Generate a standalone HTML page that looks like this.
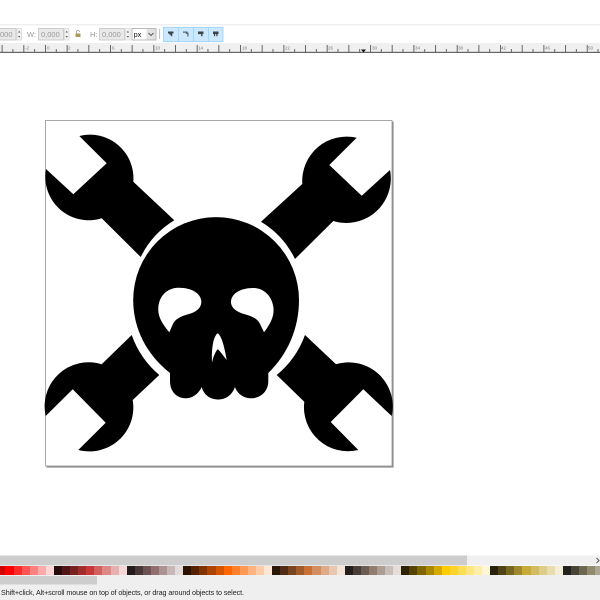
<!DOCTYPE html>
<html>
<head>
<meta charset="utf-8">
<style>
html,body{margin:0;padding:0;background:#fff;width:600px;height:600px;overflow:hidden}
#pal{position:absolute;left:-2.6px;top:566px;height:8.5px;display:flex;width:640px}
#pal i{display:block;flex:0 0 8.09px;height:8.5px}
svg{position:absolute;left:0;top:0}
</style>
</head>
<body>
<svg width="600" height="600" viewBox="0 0 600 600" font-family="'Liberation Sans',sans-serif">
<defs>
<pattern id="rt" x="1.67" y="44" width="21.67" height="9" patternUnits="userSpaceOnUse">
<rect x="0" y="1" width="0.9" height="7" fill="#555"/>
<rect x="10.8" y="5" width="0.9" height="3" fill="#555"/>
</pattern>
</defs>
<!-- toolbar -->
<rect x="0" y="24" width="600" height="1.4" fill="#efefef"/>
<rect x="-10" y="28.5" width="26" height="11.5" fill="#e9e9e9" stroke="#c4c4c4" stroke-width=".8"/>
<text x="0" y="37" font-size="7.5" fill="#999">000</text>
<rect x="17" y="28.5" width="4.5" height="11.5" fill="#f2f2f2" stroke="#d0d0d0" stroke-width=".6"/>
<path d="M18 32.5l1.2-1.6 1.2 1.6zM18 36l1.2 1.6 1.2-1.6z" fill="#555"/>
<text x="27" y="37" font-size="7.5" fill="#999">W:</text>
<rect x="38.5" y="28.5" width="25" height="11.5" fill="#e9e9e9" stroke="#c4c4c4" stroke-width=".8"/>
<text x="41" y="37" font-size="7.5" fill="#999">0,000</text>
<rect x="64.5" y="28.5" width="4.5" height="11.5" fill="#f2f2f2" stroke="#d0d0d0" stroke-width=".6"/>
<path d="M65.5 32.5l1.2-1.6 1.2 1.6zM65.5 36l1.2 1.6 1.2-1.6z" fill="#555"/>
<rect x="75.5" y="33.5" width="5" height="3.5" fill="#a89a5a"/>
<path d="M76.5 33.5v-1.5a1.5 1.5 0 0 1 3 0" fill="none" stroke="#999" stroke-width=".8"/>
<text x="90" y="37" font-size="7.5" fill="#999">H:</text>
<rect x="99.5" y="28.5" width="25" height="11.5" fill="#e9e9e9" stroke="#c4c4c4" stroke-width=".8"/>
<text x="102" y="37" font-size="7.5" fill="#999">0,000</text>
<rect x="125.7" y="28.5" width="4.5" height="11.5" fill="#f2f2f2" stroke="#d0d0d0" stroke-width=".6"/>
<path d="M126.7 32.5l1.2-1.6 1.2 1.6zM126.7 36l1.2 1.6 1.2-1.6z" fill="#555"/>
<rect x="132" y="28.5" width="24" height="11.5" fill="#fff" stroke="#aaa" stroke-width=".8"/>
<rect x="146.5" y="29" width="9" height="10.5" fill="#e2e2e2"/>
<path d="M148.5 33l2.5 2.5 2.5-2.5" fill="none" stroke="#555" stroke-width=".9"/>
<text x="133.5" y="37" font-size="7.5" fill="#222">px</text>
<rect x="159.2" y="29" width="0.9" height="10" fill="#bbb"/>
<!-- toggle buttons -->
<rect x="163.3" y="27" width="60" height="15" fill="#cce8ff"/>
<path d="M163.5 27v15M178.5 27v15M193.5 27v15M208.5 27v15M223 27v15M163 27.3h60M163 41.7h60" stroke="#99d1ff" stroke-width=".8" fill="none"/>
<g fill="#3c4448">
<path d="M168 31.5h5.5v2h-1.3v2.8h-1.4v-1.6h-1.4v-1.2h-1.4z"/>
<path d="M183 31.5h4.5v1h1v4h-1.2v-2.5h-1.5v-1.2h-2.8z" opacity=".8"/>
<path d="M198 31.5h5.5v2.4h-1v2.4h-1.4v-2.2h-3.1z"/>
<path d="M213 31.5h5.5v2.6h-1v2.2h-1.2v-2.2h-1.2v2.2h-1.1v-2.2h-1z"/>
</g>
<!-- ruler -->
<rect x="0" y="43" width="600" height="9" fill="#f0f0f0"/>
<rect x="0" y="44" width="600" height="9" fill="url(#rt)"/>
<rect x="0" y="51.8" width="600" height="1.2" fill="#666"/>
<g font-size="4.5" fill="#777">
<text x="25" y="49.5">-2</text><text x="47" y="49.5">0</text><text x="68" y="49.5">2</text>
<text x="112" y="49.5">6</text><text x="155" y="49.5">10</text><text x="198" y="49.5">14</text>
<text x="242" y="49.5">18</text><text x="285" y="49.5">22</text><text x="328" y="49.5">26</text>
<text x="372" y="49.5">30</text><text x="415" y="49.5">34</text><text x="458" y="49.5">38</text>
<text x="501" y="49.5">42</text><text x="545" y="49.5">46</text><text x="588" y="49.5">50</text>
</g>
<path d="M361 49.5h5l-2.5 3z" fill="#111"/>
<!-- page -->
<rect x="46.5" y="121.5" width="347" height="346" fill="#777"/>
<rect x="45.5" y="120.5" width="346.5" height="345.5" fill="#fff" stroke="#a8a8a8"/>
<!-- logo -->
<g fill="#000">
<path d="M79.3 136L106.7 163.3L73.3 194.3L46 169A43.5 43.5 0 0 0 101.7 218.3L140.7 257A89 89 0 0 1 174.3 220.3L133.3 181.7A43.5 43.5 0 0 0 79.3 136Z"/>
<path d="M356.7 137.7L329.3 165L361.7 195.7L390 170A44.5 44.5 0 0 1 333.3 221L295 259A89 89 0 0 0 261 221.7L302.3 184A44.5 44.5 0 0 1 356.7 137.7Z"/>
<path d="M131.7 335L101.7 364.3A44 44 0 0 0 45.7 416L72.7 389.3L105.7 422.7L78.3 450A44 44 0 0 0 132.7 400L159.3 375A93 93 0 0 1 131.7 335Z"/>
<path d="M305 335L336 364.3A44 44 0 0 1 391.7 416L363.3 389.3L330.7 422L358.3 450A44 44 0 0 1 304.3 401.7L276.7 375A93 93 0 0 0 305 335Z"/>
<path fill-rule="evenodd" d="M170 373C146 354 133.2 328 133.2 300A82.9 82.9 0 0 1 299 300C299 328 288 354 268.3 373L268.3 381C268.3 392 260 398.3 251 398.3C243 398.3 237 393 235 387C232 395 226 399.5 218.5 399.5C210 399.5 204 395 201.7 387C199 393 193 398.3 186 398.3C177 398.3 170 392 170 381Z
M169.3 332.3C161 322 158 316 158.3 308C159 295 168 288 178 287.7C191 287.5 201 293 201.3 301.5C201.5 308 196 312 189 314C180 316.5 175 319 172.5 325Z
M264 332.3C272 322 274 315 273.5 308C272 295 263 288 253 288C240 288 231 294 231 302C231 308 237 312 244 314C253 316.5 258 319 260.5 325Z
M217.7 333.3C222 336 225 350 226.7 360C222 354 219 350 217.7 349.3C215 352 213 358 212 362.7C211.5 352 212.5 337 217.7 333.3Z"/>
</g>
<!-- scrollbar -->
<rect x="0" y="555.5" width="600" height="10" fill="#f0f0f0"/>
<rect x="0" y="555.5" width="467" height="10" fill="#cdcdcd"/>
<path d="M596.5 558l2.5 2.5-2.5 2.5" fill="none" stroke="#555" stroke-width="1"/>
<!-- status -->
<rect x="0" y="574.5" width="600" height="25.5" fill="#efefef"/>
<rect x="0" y="576" width="97" height="8.5" fill="#cdcdcd"/>
<text x="1" y="595" font-size="7.2" fill="#222" textLength="243" lengthAdjust="spacing">Shift+click, Alt+scroll mouse on top of objects, or drag around objects to select.</text>
</svg>
<div id="pal">
<i style="background:#d40000"></i><i style="background:#ff0000"></i><i style="background:#ff2a2a"></i><i style="background:#ff5555"></i><i style="background:#ff8080"></i><i style="background:#ffaaaa"></i><i style="background:#ffd5d5"></i>
<i style="background:#280b0b"></i><i style="background:#501616"></i><i style="background:#782121"></i><i style="background:#a02c2c"></i><i style="background:#c83737"></i><i style="background:#d35f5f"></i><i style="background:#de8787"></i><i style="background:#e9afaf"></i><i style="background:#f4d7d7"></i>
<i style="background:#241c1c"></i><i style="background:#483737"></i><i style="background:#6c5353"></i><i style="background:#916f6f"></i><i style="background:#ac9393"></i><i style="background:#c8b7b7"></i><i style="background:#e3dbdb"></i>
<i style="background:#2b1100"></i><i style="background:#552200"></i><i style="background:#803300"></i><i style="background:#aa4400"></i><i style="background:#d45500"></i><i style="background:#ff6600"></i><i style="background:#ff7f2a"></i><i style="background:#ff9955"></i><i style="background:#ffb380"></i><i style="background:#ffccaa"></i><i style="background:#ffe6d5"></i>
<i style="background:#281708"></i><i style="background:#502d16"></i><i style="background:#784421"></i><i style="background:#a05a2c"></i><i style="background:#c87137"></i><i style="background:#d38d5f"></i><i style="background:#deaa87"></i><i style="background:#e9c6af"></i><i style="background:#f4e3d7"></i>
<i style="background:#241f1c"></i><i style="background:#483e37"></i><i style="background:#6c5d53"></i><i style="background:#917c6f"></i><i style="background:#ac9d93"></i><i style="background:#c8beb7"></i><i style="background:#e3dedb"></i>
<i style="background:#2b2200"></i><i style="background:#554400"></i><i style="background:#806600"></i><i style="background:#aa8800"></i><i style="background:#d4aa00"></i><i style="background:#ffcc00"></i><i style="background:#ffd42a"></i><i style="background:#ffdd55"></i><i style="background:#ffe680"></i><i style="background:#ffeeaa"></i><i style="background:#fff6d5"></i>
<i style="background:#28220b"></i><i style="background:#504416"></i><i style="background:#786721"></i><i style="background:#a0892c"></i><i style="background:#c8ab37"></i><i style="background:#d3bc5f"></i><i style="background:#decd87"></i><i style="background:#e9ddaf"></i><i style="background:#f4eed7"></i>
<i style="background:#24221c"></i><i style="background:#484437"></i><i style="background:#6c6753"></i><i style="background:#918a6f"></i><i style="background:#aca793"></i>
</div>
</body>
</html>
